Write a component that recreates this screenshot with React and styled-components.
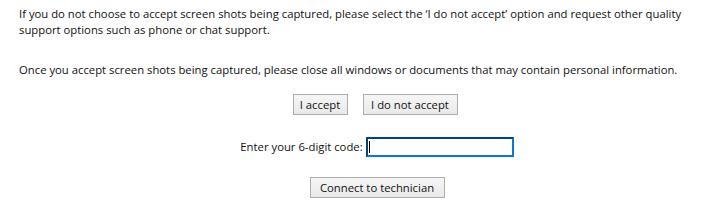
import React from "react";
import styled, { createGlobalStyle } from "styled-components";

const Global = createGlobalStyle`
  html, body { margin: 0; padding: 0; background: #fff; }
  body { font-family: "Open Sans", "Noto Sans", sans-serif; font-size: 11.3px; color: #111; }
`;

const Page = styled.div`
  width: 709px;
  height: 224px;
  box-sizing: border-box;
  padding: 6px 19px 0 19px;
`;

const Para = styled.p`
  margin: 0 0 ${(p) => p.$gap || 0}px 0;
  line-height: 16px;
`;

const Controls = styled.div`
  display: flex;
  flex-direction: column;
  align-items: center;
  padding-left: 45px;
  margin-top: 16px;
`;

const ButtonRow = styled.div`
  display: flex;
  gap: 15px;
  margin-left: -4px;
  margin-bottom: ${(p) => p.$gap || 0}px;
`;

const Button = styled.button`
  box-sizing: border-box;
  width: ${(p) => p.$w}px;
  height: 21px;
  padding: 0;
  border: 1px solid #adadad;
  background: linear-gradient(#f6f6f6, #e9e9e9);
  font-family: inherit;
  font-size: 11.3px;
  color: #111;
  line-height: 19px;
  text-align: center;
  border-radius: 0;
  cursor: default;
`;

const CodeRow = styled.div`
  display: flex;
  align-items: center;
  gap: 3px;
  margin-bottom: 20px;
`;

const Label = styled.label`
  line-height: 16px;
`;

const InputWrap = styled.span`
  position: relative;
  display: inline-block;
`;

const CodeInput = styled.input`
  box-sizing: border-box;
  width: 148px;
  height: 20px;
  border: 2px solid;
  border-color: #064379 #0a78d2 #0a78d2 #064379;
  outline: none;
  padding: 0 2px;
  font-family: inherit;
  font-size: 11px;
  caret-color: transparent;
`;

const Caret = styled.span`
  position: absolute;
  left: 3px;
  top: 4px;
  width: 1px;
  height: 12px;
  background: #000;
`;

export default function App() {
  return (
    <>
      <Global />
      <Page>
        <Para $gap={24}>
          If you do not choose to accept screen shots being captured, please select the ‘I do not accept’ option and request other quality support options such as phone or chat support.
        </Para>
        <Para>
          Once you accept screen shots being captured, please close all windows or documents that may contain personal information.
        </Para>
        <Controls>
          <ButtonRow $gap={22}>
            <Button $w={55}>I accept</Button>
            <Button $w={95}>I do not accept</Button>
          </ButtonRow>
          <CodeRow>
            <Label htmlFor="code">Enter your 6-digit code:</Label>
            <InputWrap>
              <CodeInput id="code" type="text" />
              <Caret />
            </InputWrap>
          </CodeRow>
          <Button $w={135}>Connect to technician</Button>
        </Controls>
      </Page>
    </>
  );
}
